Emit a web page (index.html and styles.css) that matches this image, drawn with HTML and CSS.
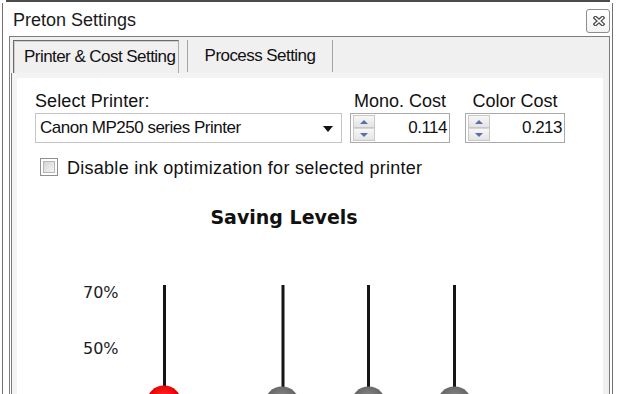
FILE: index.html
```html
<!DOCTYPE html>
<html>
<head>
<meta charset="utf-8">
<title>Preton Settings</title>
<link rel="stylesheet" href="styles.css">
</head>
<body>
<div class="screen">
  <div class="topline"></div>
  <div class="window">
    <div class="titlebar">
      <div class="title">Preton Settings</div>
      <div class="close">
        <svg width="12" height="10" viewBox="0 0 12 10">
          <path d="M2.5 1.8 L9.5 8.2 M9.5 1.8 L2.5 8.2" stroke="#4a4a4a" stroke-width="4" stroke-linecap="square" fill="none"/>
          <path d="M2.5 1.8 L9.5 8.2 M9.5 1.8 L2.5 8.2" stroke="#ffffff" stroke-width="1.6" stroke-linecap="square" fill="none"/>
        </svg>
      </div>
    </div>
    <div class="tabs">
      <div class="tabhead">
        <div class="tab active">Printer &amp; Cost Setting</div>
        <div class="tab second">Process Setting</div>
      </div>
      <div class="panel">
        <div class="row">
          <div class="field printer">
            <div class="label">Select Printer:</div>
            <div class="select">
              <span>Canon MP250 series Printer</span>
              <span class="arrow"></span>
            </div>
          </div>
          <div class="field cost mono">
            <div class="label">Mono. Cost</div>
            <div class="spin">
              <div class="spinbtns"><span class="sb"><i class="up"></i></span><span class="sb"><i class="down"></i></span></div>
              <span class="val">0.114</span>
            </div>
          </div>
          <div class="field cost color">
            <div class="label">Color Cost</div>
            <div class="spin">
              <div class="spinbtns"><span class="sb"><i class="up"></i></span><span class="sb"><i class="down"></i></span></div>
              <span class="val">0.213</span>
            </div>
          </div>
        </div>
        <div class="check">
          <span class="box"></span>
          <span class="checklabel">Disable ink optimization for selected printer</span>
        </div>
        <svg class="chart" width="570" height="210" viewBox="0 0 570 210">
          <defs>
            <radialGradient id="red" cx="50%" cy="35%" r="65%">
              <stop offset="0" stop-color="#ff3030"/>
              <stop offset="0.6" stop-color="#e80000"/>
              <stop offset="1" stop-color="#a00000"/>
            </radialGradient>
            <radialGradient id="gray" cx="50%" cy="35%" r="65%">
              <stop offset="0" stop-color="#8c8c8c"/>
              <stop offset="0.6" stop-color="#666666"/>
              <stop offset="1" stop-color="#3f3f3f"/>
            </radialGradient>
          </defs>
          <g transform="translate(-35 -190)">
            <text class="ctitle" x="284" y="223.5" text-anchor="middle">Saving Levels</text>
            <text class="axis" x="83" y="298">70%</text>
            <text class="axis" x="83" y="353.5">50%</text>
            <text class="axis" x="83" y="409">35%</text>
            <rect x="163" y="285" width="3" height="110" fill="#151515"/>
            <rect x="281.5" y="285" width="3" height="110" fill="#151515"/>
            <rect x="367" y="285" width="3" height="110" fill="#151515"/>
            <rect x="453" y="285" width="3" height="110" fill="#151515"/>
            <circle cx="164" cy="403" r="17.5" fill="url(#red)"/>
            <circle cx="282" cy="404" r="17.5" fill="url(#gray)"/>
            <circle cx="368.5" cy="404" r="17.5" fill="url(#gray)"/>
            <circle cx="454.5" cy="404" r="17.5" fill="url(#gray)"/>
          </g>
        </svg>
      </div>
    </div>
  </div>
</div>
</body>
</html>
```
FILE: styles.css
```css
* { box-sizing: border-box; }
html, body { margin: 0; padding: 0; background: #ffffff; }
body { font-family: "Liberation Sans", Arial, sans-serif; color: #111111; }

.screen {
  width: 618px;
  height: 394px;
  overflow: hidden;
  background: #ffffff;
}

.topline {
  height: 2px;
  margin: 0 8px 0 6px;
  background: #4b4b4b;
}

.window {
  margin: 1px 0 0 2px;
  width: 611px;
  height: 420px;
  border-left: 1px solid #707070;
  border-right: 1px solid #707070;
  display: flex;
  flex-direction: column;
}

.titlebar {
  height: 33px;
  flex: none;
  display: flex;
  justify-content: space-between;
  align-items: flex-start;
  padding: 6px 2px 0 10px;
}

.title {
  font-size: 18px;
  line-height: 20px;
  margin-top: 1px;
  color: #1a1a1a;
}

.close {
  width: 24px;
  height: 24px;
  border: 1px solid #8d8d8d;
  border-radius: 3px;
  background: linear-gradient(#ffffff, #f3f3f3);
  display: flex;
  align-items: center;
  justify-content: center;
  padding-left: 1px;
}

.tabs {
  margin-left: 6px;
  width: 601px;
  flex: 1;
  border: 1px solid #7d7d7d;
  border-bottom: none;
  display: flex;
  flex-direction: column;
}

.tabhead {
  height: 36px;
  flex: none;
  background: #f0f0f0;
  display: flex;
  align-items: flex-end;
  padding-left: 3px;
}

.tab {
  font-size: 17px;
  letter-spacing: -0.55px;
  line-height: 20px;
  display: flex;
  align-items: center;
  color: #111111;
}

.tab.active {
  width: 166px;
  height: 33px;
  border: 1px solid #6b6b6b;
  border-bottom: none;
  border-right-color: #ababab;
  box-shadow: inset 1px 1px 0 #cfcfcf;
  padding-left: 10px;
}

.tab.second {
  margin-left: 8px;
  width: 146px;
  height: 32px;
  margin-bottom: 1px;
  border-left: 1px solid #a3a3a3;
  border-right: 1px solid #a3a3a3;
  justify-content: center;
}

.panel {
  flex: 1;
  margin-left: 1px;
  background: #ffffff;
  border-left: 1px solid #7a7a7a;
  box-shadow: inset 5px 0 0 #f4f4f4, inset -6px 0 0 #f0f0f0, inset 0 5px 0 #f3f3f3;
  padding: 18px 0 0 23px;
}

.row {
  display: flex;
  align-items: flex-start;
}

.field {
  display: flex;
  flex-direction: column;
}

.label {
  font-size: 18px;
  line-height: 20px;
  margin-bottom: 2px;
  color: #111111;
}

.printer .label { letter-spacing: 0.1px; }

.cost { align-items: center; }
.cost.mono { margin-left: 8px; }
.cost.color { margin-left: 15px; }

.select {
  width: 307px;
  height: 30px;
  border: 1px solid #c4c4c4;
  background: #ffffff;
  display: flex;
  align-items: center;
  justify-content: space-between;
  padding: 0 8px 0 4px;
  font-size: 17px;
  letter-spacing: -0.5px;
}

.arrow {
  width: 0;
  height: 0;
  border-left: 5px solid transparent;
  border-right: 5px solid transparent;
  border-top: 6px solid #111111;
  margin-top: 2px;
}

.spin {
  width: 100px;
  height: 30px;
  border: 1px solid #a9a9a9;
  background: #ffffff;
  display: flex;
  align-items: center;
  padding: 0 2px;
}

.spinbtns {
  width: 22px;
  height: 26px;
  display: flex;
  flex-direction: column;
}

.sb {
  height: 13px;
  border: 1px solid #c8c8c8;
  background: linear-gradient(#f7f7f7, #e4e4e4);
  display: flex;
  align-items: center;
  justify-content: center;
}

.sb + .sb { border-top-color: #d6d6d6; }

.up, .down {
  width: 0;
  height: 0;
  border-left: 4.5px solid transparent;
  border-right: 4.5px solid transparent;
}
.up { border-bottom: 4px solid #5a6eab; }
.down { border-top: 4px solid #5a6eab; }

.val {
  flex: 1;
  text-align: right;
  font-size: 17px;
  letter-spacing: -0.5px;
  color: #111111;
}

.check {
  display: flex;
  align-items: flex-start;
  margin-top: 15px;
  margin-left: 5px;
  gap: 9px;
}

.box {
  width: 18px;
  height: 18px;
  border: 1px solid #8e8f8f;
  background: #ffffff;
  padding: 2px;
  display: flex;
}
.box::after {
  content: "";
  flex: 1;
  border: 1px solid #b4b6b8;
  background: linear-gradient(135deg, #d4d4d4, #f6f6f6);
}

.checklabel {
  font-size: 18px;
  line-height: 20px;
  letter-spacing: 0.27px;
  color: #111111;
}

.chart {
  display: block;
  margin-top: 12px;
}

.ctitle {
  font-family: "DejaVu Sans", Verdana, sans-serif;
  font-weight: bold;
  font-size: 19px;
  fill: #111111;
}

.axis {
  font-family: "DejaVu Sans", Verdana, sans-serif;
  font-size: 16px;
  fill: #1c1c1c;
}
```
